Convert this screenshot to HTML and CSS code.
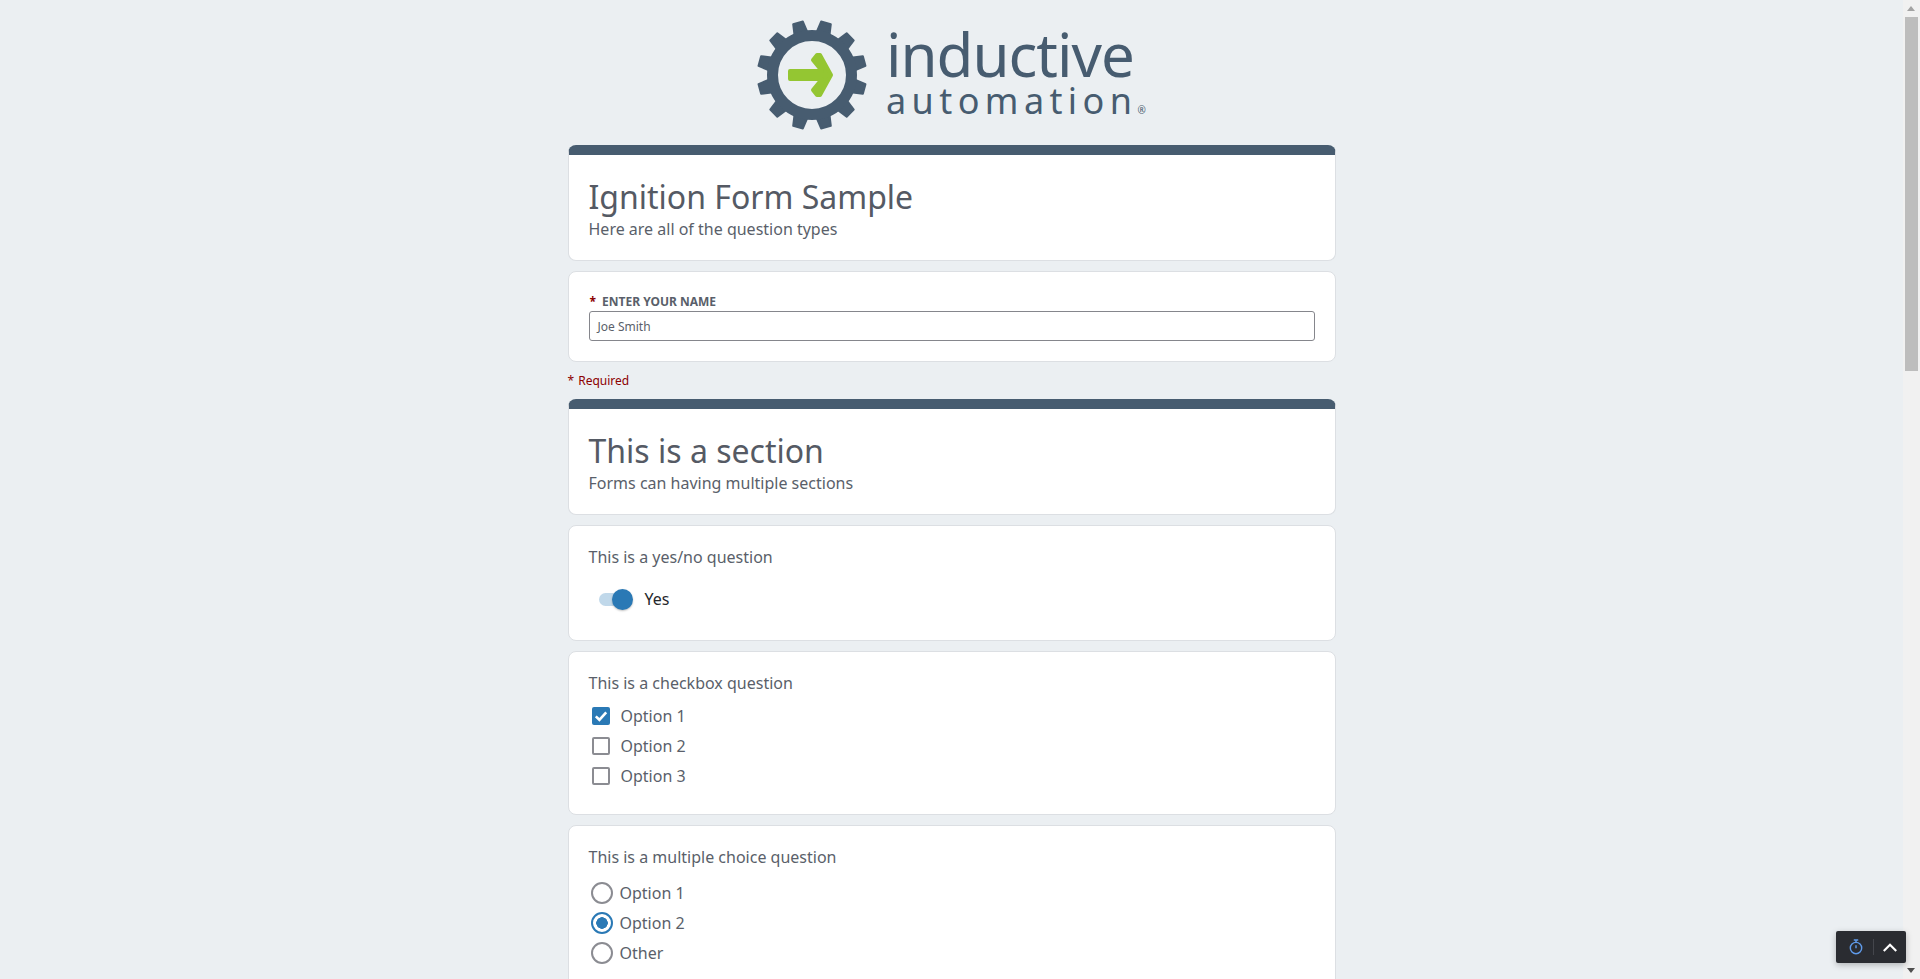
FILE: index.html
```html
<!DOCTYPE html>
<html lang="en">
<head>
  <meta charset="UTF-8">
  <meta name="viewport" content="width=device-width, initial-scale=1.0">
  <title>Ignition Form Sample</title>
  <link rel="stylesheet" href="styles.css">
</head>
<body>

<div class="page">
  <main class="content">

    <header class="logo">
      <svg class="logo-gear" viewBox="0 0 130 130" aria-hidden="true">
        <defs>
          <polygon id="tooth" points="58,25 60,11 70,11 72,25" />
        </defs>
        <g class="gear-teeth">
          <use href="#tooth" transform="rotate(-15 65 65)" />
          <use href="#tooth" transform="rotate(15 65 65)" />
          <use href="#tooth" transform="rotate(45 65 65)" />
          <use href="#tooth" transform="rotate(75 65 65)" />
          <use href="#tooth" transform="rotate(105 65 65)" />
          <use href="#tooth" transform="rotate(135 65 65)" />
          <use href="#tooth" transform="rotate(165 65 65)" />
          <use href="#tooth" transform="rotate(195 65 65)" />
          <use href="#tooth" transform="rotate(225 65 65)" />
          <use href="#tooth" transform="rotate(255 65 65)" />
          <use href="#tooth" transform="rotate(285 65 65)" />
          <use href="#tooth" transform="rotate(315 65 65)" />
        </g>
        <circle class="gear-ring" cx="65" cy="65" r="39.5" />
        <polygon class="gear-arrow" points="43,61 75,61 66,50 70,45 73,45 84,65 73,85 70,85 66,80 75,69 43,69" />
      </svg>
      <div class="logo-text">
        <div class="logo-top">inductive</div>
        <div class="logo-bottom">automation<span class="logo-reg">®</span></div>
      </div>
    </header>

    <div class="form">
      <section class="card card-head">
        <h1>Ignition Form Sample</h1>
        <p>Here are all of the question types</p>
      </section>

      <section class="card card-name">
        <label class="name-label"><span class="star">*</span>ENTER YOUR NAME</label>
        <div class="name-input">Joe Smith</div>
      </section>

      <p class="required">* Required</p>

      <section class="card card-head">
        <h1>This is a section</h1>
        <p>Forms can having multiple sections</p>
      </section>

      <section class="card card-yesno">
        <div class="question">This is a yes/no question</div>
        <div class="toggle-row">
          <span class="toggle"><span class="toggle-thumb"></span></span>
          <span class="toggle-label">Yes</span>
        </div>
      </section>

      <section class="card card-check">
        <div class="question">This is a checkbox question</div>
        <div class="option">
          <span class="checkbox checked">
            <svg viewBox="0 0 18 18"><path d="M3.8 9.4l3.6 3.4L14.2 5.4" /></svg>
          </span>
          Option 1
        </div>
        <div class="option"><span class="checkbox"></span>Option 2</div>
        <div class="option"><span class="checkbox"></span>Option 3</div>
      </section>

      <section class="card card-radio">
        <div class="question">This is a multiple choice question</div>
        <div class="option"><span class="radio"></span>Option 1</div>
        <div class="option"><span class="radio checked"></span>Option 2</div>
        <div class="option"><span class="radio"></span>Other</div>
      </section>
    </div>
  </main>

  <aside class="scrollbar">
    <span class="arrow-up"></span>
    <span class="thumb"></span>
    <span class="arrow-down"></span>
  </aside>
</div>

<div class="toolbox">
  <svg class="toolbox-timer" viewBox="0 0 18 18" aria-hidden="true">
    <path d="M6.5 1.2h5M9 1.2v2.6" />
    <circle cx="9" cy="10.2" r="6.4" />
    <path d="M9 7v3.4" />
  </svg>
  <span class="toolbox-line"></span>
  <svg class="toolbox-up" viewBox="0 0 18 12" aria-hidden="true">
    <path d="M2 10l7-7 7 7" />
  </svg>
</div>

</body>
</html>
```

FILE: styles.css
```css
html, body {
  height: 100%;
  margin: 0;
}

body {
  font-family: "Noto Sans", "Open Sans", sans-serif;
  background-color: #ebeff2;
  color: #5a5f6a;
}

.page {
  display: flex;
  height: 100vh;
  overflow: hidden;
}

.content {
  flex: 1;
  overflow: hidden;
}

/* logo */
.logo {
  display: flex;
  justify-content: center;
  height: 145px;
}

.logo-gear {
  width: 130px;
  height: 130px;
  margin-top: 10px;
  margin-left: -8.5px;
}

.gear-teeth {
  fill: #475c70;
  stroke: #475c70;
  stroke-width: 2;
  stroke-linejoin: round;
}

.gear-ring {
  fill: #ebeff2;
  stroke: #475c70;
  stroke-width: 11;
}

.gear-arrow {
  fill: #94c632;
  stroke: #94c632;
  stroke-width: 4;
  stroke-linejoin: round;
}

.logo-text {
  margin-left: 9.5px;
  color: #475c70;
  width: 262px;
}

.logo-top {
  font-size: 60px;
  line-height: 60px;
  margin-top: 24px;
  letter-spacing: -1px;
}

.logo-bottom {
  font-size: 36px;
  line-height: 36px;
  letter-spacing: 5.4px;
  margin-top: -1px;
  white-space: nowrap;
}

.logo-reg {
  font-size: 10px;
  letter-spacing: 0;
}

/* form cards */
.form {
  width: 768px;
  margin: 0 auto;
}

.card {
  box-sizing: border-box;
  background-color: #fff;
  border: 1px solid #dcdfe3;
  border-radius: 8px;
  padding: 0 20px;
  margin-bottom: 10px;
}

.card-head {
  height: 116px;
  border-top: 10px solid #475c70;
  padding-top: 22px;
}

.card-head h1 {
  margin: 0;
  font-size: 32px;
  font-weight: 400;
  line-height: 40px;
  color: #555a64;
}

.card-head p {
  margin: 1px 0 0;
  font-size: 16px;
  line-height: 22px;
}

.card-name {
  height: 91px;
  padding-top: 21px;
  margin-bottom: 0;
}

.name-label {
  display: block;
  font-size: 12px;
  font-weight: 700;
  line-height: 18px;
}

.star {
  color: #8b0000;
  margin-right: 6px;
  margin-left: 1px;
}

.name-input {
  box-sizing: border-box;
  height: 30px;
  border: 1px solid #85868c;
  border-radius: 3px;
  padding: 0 8px;
  font-size: 12px;
  line-height: 30px;
}

.required {
  margin: 0;
  height: 37px;
  padding-top: 10px;
  box-sizing: border-box;
  font-size: 12px;
  line-height: 17px;
  word-spacing: 1px;
  color: #8b0000;
}

.question {
  font-size: 16px;
  line-height: 22px;
}

.card-yesno {
  height: 116px;
  padding-top: 20px;
}

.toggle-row {
  display: flex;
  align-items: center;
  margin-top: 18px;
  padding-left: 10px;
  height: 26px;
}

.toggle {
  position: relative;
  width: 24px;
  height: 13px;
  border-radius: 7px;
  background-color: #c0d8ea;
}

.toggle-thumb {
  position: absolute;
  right: -10px;
  top: -4px;
  width: 21px;
  height: 21px;
  border-radius: 50%;
  background-color: #2a79b5;
  box-shadow: 0 1px 2px rgba(0, 0, 0, 0.25);
}

.toggle-label {
  margin-left: 22px;
  font-size: 16px;
  color: #25272b;
}

.card-check {
  height: 164px;
  padding-top: 20px;
}

.card-check .question {
  margin-bottom: 7px;
}

.card-radio {
  height: 400px;
  padding-top: 20px;
}

.card-radio .question {
  margin-bottom: 10px;
}

.option {
  display: flex;
  align-items: center;
  height: 30px;
  font-size: 16px;
}

.checkbox {
  box-sizing: border-box;
  width: 18px;
  height: 18px;
  margin: 0 11px 0 3px;
  border: 2px solid #8b8c92;
  border-radius: 2px;
}

.checkbox.checked {
  border: 0;
  background-color: #2a79b5;
}

.checkbox svg {
  display: block;
  fill: none;
  stroke: #fff;
  stroke-width: 2.6;
}

.radio {
  box-sizing: border-box;
  width: 22px;
  height: 22px;
  margin: 0 7px 0 2px;
  border: 2.5px solid #8b8c92;
  border-radius: 50%;
}

.radio.checked {
  border-color: #2a79b5;
  background: radial-gradient(circle, #2a79b5 0, #2a79b5 5.5px, #fff 6px);
}

/* fake scrollbar, page is longer than the window */
.scrollbar {
  flex: none;
  width: 17px;
  background-color: #f1f1f1;
  position: relative;
}

.thumb {
  position: absolute;
  top: 17px;
  left: 2px;
  width: 13px;
  height: 354px;
  background-color: #bdbdbd;
}

.arrow-up, .arrow-down {
  position: absolute;
  left: 4px;
  width: 0;
  height: 0;
  border-left: 4px solid transparent;
  border-right: 4px solid transparent;
}

.arrow-up {
  top: 6px;
  border-bottom: 5px solid #a3a3a3;
}

.arrow-down {
  bottom: 6px;
  border-top: 5px solid #505050;
}

/* floating dev box */
.toolbox {
  position: fixed;
  right: 14px;
  bottom: 16px;
  display: flex;
  align-items: center;
  width: 70px;
  height: 32px;
  border-radius: 2px;
  background-color: #2a2c31;
  box-shadow: 0 2px 6px rgba(0, 0, 0, 0.25);
}

.toolbox-timer {
  width: 16px;
  height: 16px;
  margin-left: 12px;
  fill: none;
  stroke: #5f9bea;
  stroke-width: 1.6;
}

.toolbox-line {
  width: 1px;
  height: 16px;
  margin-left: 9px;
  background-color: #44464c;
}

.toolbox-up {
  width: 16px;
  height: 11px;
  margin-left: 8px;
  fill: none;
  stroke: #fff;
  stroke-width: 2.4;
}
```
